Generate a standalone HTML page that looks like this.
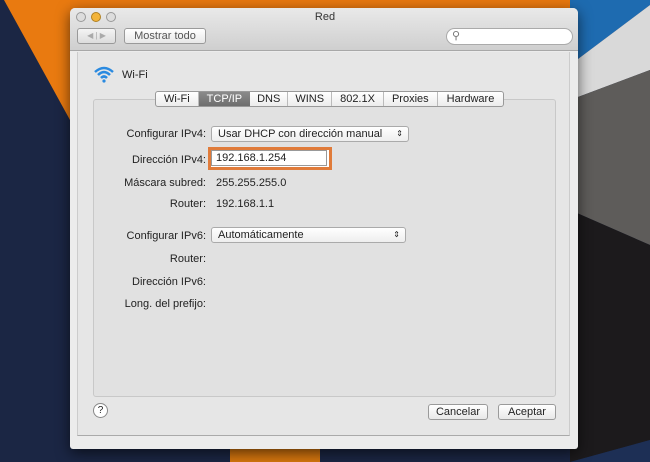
<!DOCTYPE html>
<html><head><meta charset="utf-8"><style>
*{margin:0;padding:0;box-sizing:border-box}
body{width:650px;height:462px;overflow:hidden;position:relative;background:#1b2644;font-family:"Liberation Sans",sans-serif;font-size:11px;color:#222}
.a{position:absolute}
.lbl{position:absolute;text-align:right;width:120px;left:86px;font-size:11px;color:#222}
.val{position:absolute;left:216px;font-size:11px}
.btn{position:absolute;background:linear-gradient(#fff,#e8e8e8);border:1px solid #9a9a9a;border-radius:3px;text-align:center;font-size:11px;line-height:14px}
</style></head><body>
<svg class="a" style="left:0;top:0" width="650" height="462">
<rect width="650" height="462" fill="#1b2644"/>
<polygon points="4,0 90,0 90,150 70,120" fill="#e97a10"/>
<polygon points="70,0 600,0 600,10 70,10" fill="#e8780f"/>
<polygon points="570,0 650,0 650,5 570,65" fill="#1e6bb0"/>
<polygon points="570,65 650,5 650,70 570,100" fill="#d9d9d9"/>
<polygon points="570,100 650,70 650,245 570,210" fill="#5e5c5a"/>
<polygon points="570,210 650,245 650,440 570,462" fill="#1c1a1c"/>
<polygon points="570,462 650,440 650,462" fill="#1d2f55"/>
<rect x="230" y="440" width="90" height="22" fill="#d8770e"/>
</svg>
<!-- window -->
<div class="a" style="left:70px;top:8px;width:508px;height:441px;background:#ececec;border-radius:5px 5px 3px 3px;box-shadow:0 4px 14px rgba(0,0,0,.6)"></div>
<div class="a" style="left:70px;top:8px;width:508px;height:43px;background:linear-gradient(#e9e9e9,#cfcfcf);border-radius:5px 5px 0 0;border-bottom:1px solid #a8a8a8"></div>
<div class="a" style="left:76px;top:12px;width:10px;height:10px;border-radius:50%;border:1px solid #999;background:#ddd"></div>
<div class="a" style="left:91px;top:12px;width:10px;height:10px;border-radius:50%;border:1px solid #b08020;background:#f3b43a"></div>
<div class="a" style="left:106px;top:12px;width:10px;height:10px;border-radius:50%;border:1px solid #999;background:#ddd"></div>
<div class="a" style="left:0;width:650px;top:11px;text-align:center;font-size:11px;color:#333">Red</div>
<div class="a" style="left:77px;top:28px;width:39px;height:16px;border:1px solid #999;border-radius:3px;background:linear-gradient(#f4f4f4,#dcdcdc);font-size:8px;color:#aaa;line-height:14px;text-align:center">◀ | ▶</div>
<div class="btn" style="left:124px;top:28px;width:82px;height:16px;color:#555">Mostrar todo</div>
<div class="a" style="left:446px;top:28px;width:127px;height:17px;border:1px solid #aaa;border-radius:9px;background:#fff"></div>
<div class="a" style="left:452px;top:29px;font-size:11px;color:#777">⚲</div>
<!-- sheet -->
<div class="a" style="left:77px;top:52px;width:493px;height:384px;background:#e6e6e6;border-left:1px solid #ccc;border-right:1px solid #ccc;border-bottom:1px solid #aaa"></div>
<svg class="a" style="left:93px;top:64px" width="22" height="22" viewBox="0 0 22 22"><path d="M2 8 Q11 0 20 8" stroke="#2a8ae0" stroke-width="2.5" fill="none"/><path d="M5 11 Q11 5 17 11" stroke="#2a8ae0" stroke-width="2.5" fill="none"/><path d="M8 14 Q11 11 14 14" stroke="#2a8ae0" stroke-width="2.5" fill="none"/><circle cx="11" cy="17" r="1.6" fill="#2a8ae0"/></svg>
<div class="a" style="left:122px;top:69px;font-size:11px">Wi-Fi</div>
<div class="a" style="left:93px;top:99px;width:463px;height:298px;border:1px solid #c8c8c8;border-radius:3px;background:#e1e1e1"></div>
<!-- tabs -->
<div class="a" style="left:155px;top:91px;height:16px;display:flex;border:1px solid #999;border-radius:3px;background:linear-gradient(#fff,#ececec);font-size:11px;line-height:14px;overflow:hidden">
<div style="padding:0 8px;border-right:1px solid #bbb">Wi-Fi</div>
<div style="padding:0 8px;background:linear-gradient(#8a8a8a,#6e6e6e);color:#fff">TCP/IP</div>
<div style="padding:0 7px;border-right:1px solid #bbb">DNS</div>
<div style="padding:0 7px;border-right:1px solid #bbb">WINS</div>
<div style="padding:0 8px;border-right:1px solid #bbb">802.1X</div>
<div style="padding:0 8px;border-right:1px solid #bbb">Proxies</div>
<div style="padding:0 9px">Hardware</div>
</div>
<div class="lbl" style="top:128px">Configurar IPv4:</div>
<div class="a" style="left:211px;top:126px;width:198px;height:16px;border:1px solid #aaa;border-radius:3px;background:linear-gradient(#fff,#eee);padding-left:6px;line-height:14px">Usar DHCP con dirección manual<span style="position:absolute;right:5px;font-size:8px">⇕</span></div>
<div class="lbl" style="top:154px">Dirección IPv4:</div>
<div class="a" style="left:208px;top:147px;width:124px;height:23px;border:3px solid #e07b3a;background:#fff"></div>
<div class="a" style="left:211px;top:150px;width:116px;height:16px;border:1px solid #999;background:#fff;padding-left:4px;line-height:14px">192.168.1.254</div>
<div class="lbl" style="top:177px">Máscara subred:</div>
<div class="val" style="top:177px">255.255.255.0</div>
<div class="lbl" style="top:198px">Router:</div>
<div class="val" style="top:198px">192.168.1.1</div>
<div class="lbl" style="top:230px">Configurar IPv6:</div>
<div class="a" style="left:211px;top:227px;width:195px;height:16px;border:1px solid #aaa;border-radius:3px;background:linear-gradient(#fff,#eee);padding-left:6px;line-height:14px">Automáticamente<span style="position:absolute;right:5px;font-size:8px">⇕</span></div>
<div class="lbl" style="top:253px">Router:</div>
<div class="lbl" style="top:276px">Dirección IPv6:</div>
<div class="lbl" style="top:298px">Long. del prefijo:</div>
<div class="a" style="left:93px;top:403px;width:15px;height:15px;border:1px solid #888;border-radius:50%;background:#fff;text-align:center;line-height:13px;font-size:10px">?</div>
<div class="btn" style="left:428px;top:404px;width:60px;height:16px">Cancelar</div>
<div class="btn" style="left:498px;top:404px;width:58px;height:16px">Aceptar</div>
</body></html>
